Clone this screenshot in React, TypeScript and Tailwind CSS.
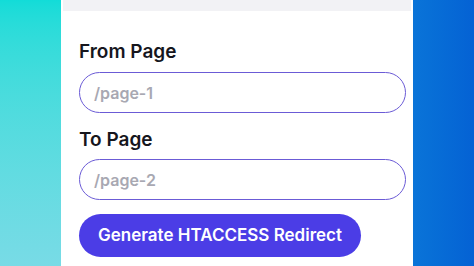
import React from 'react';

export default function App() {
  return (
    <div className="flex h-[266px] w-[474px] overflow-hidden font-['Inter',sans-serif]">
      {/* left backdrop */}
      <div className="w-[61px] shrink-0 bg-gradient-to-b from-[#12dcd8] to-[#78dbe6]"></div>

      {/* form card */}
      <div className="flex min-w-0 flex-1 flex-col bg-white">
        <div className="mx-[2px] h-[11px] shrink-0 bg-[#f2f2f5]"></div>
        <div className="flex flex-col px-[18px] pt-[29px]">
          <label className="text-[19px] font-semibold leading-[24px] text-[#16161d]">From Page</label>
          <div className="mt-[8px] flex h-[41px] w-[327px] items-center rounded-full border-[1.5px] border-[#6b5bd6] px-[14px]">
            <span className="text-[16px] font-semibold text-[#a8a8b2]">/page-1</span>
          </div>
          <label className="mt-[15px] text-[19px] font-semibold leading-[24px] text-[#16161d]">To Page</label>
          <div className="mt-[7px] flex h-[41px] w-[327px] items-center rounded-full border-[1.5px] border-[#6b5bd6] px-[14px]">
            <span className="text-[16px] font-semibold text-[#a8a8b2]">/page-2</span>
          </div>
          <button className="mt-[14px] flex h-[43px] w-[282px] items-center justify-center rounded-full bg-[#4b3de6] text-[17px] font-semibold text-white">
            Generate HTACCESS Redirect
          </button>
        </div>
      </div>

      {/* right backdrop */}
      <div className="w-[61px] shrink-0 bg-gradient-to-r from-[#0a74d8] to-[#0562d4]"></div>
    </div>
  );
}
